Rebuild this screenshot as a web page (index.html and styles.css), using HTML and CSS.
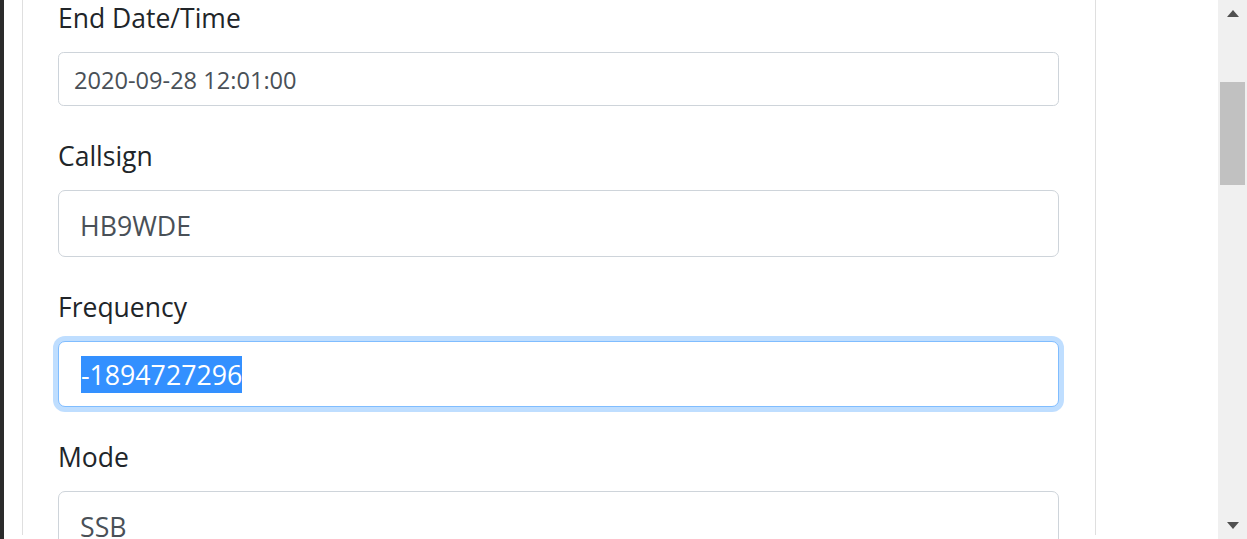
FILE: index.html
```html
<!DOCTYPE html>
<html lang="en">
<head>
<meta charset="utf-8">
<title>Edit QSO</title>
<link rel="stylesheet" href="styles.css">
</head>
<body>
<div class="edge"></div>
<main class="main">
  <div class="card">
    <div class="card-body">
      <div class="form-group">
        <label class="label">End Date/Time</label>
        <input class="form-control form-control-sm" type="text" value="2020-09-28 12:01:00">
      </div>
      <div class="form-group">
        <label class="label">Callsign</label>
        <input class="form-control" type="text" value="HB9WDE">
      </div>
      <div class="form-group">
        <label class="label">Frequency</label>
        <div class="form-control is-focused"><span class="selected">-1894727296</span></div>
      </div>
      <div class="form-group">
        <label class="label">Mode</label>
        <input class="form-control" type="text" value="SSB">
      </div>
    </div>
  </div>
</main>
<div class="scrollbar">
  <div class="sb-btn"><span class="arrow-up"></span></div>
  <div class="sb-track"><div class="sb-thumb"></div></div>
  <div class="sb-btn"><span class="arrow-down"></span></div>
</div>
</body>
</html>
```
FILE: styles.css
```css
html, body {
  margin: 0;
  padding: 0;
  height: 539px;
  overflow: hidden;
}
body {
  display: flex;
  font-family: "Open Sans", "Noto Sans", sans-serif;
  background: #ffffff;
}
.edge {
  width: 4px;
  flex: 0 0 4px;
  background: #2b2b2b;
}
.main {
  flex: 1 1 auto;
  background: #ffffff;
  padding-left: 18px;
  overflow: hidden;
}
.card {
  width: 1074px;
  box-sizing: border-box;
  border-left: 1px solid #dfdfdf;
  border-right: 1px solid #dfdfdf;
  height: 100%;
}
.card-body {
  padding: 0 36px 0 35px;
  margin-top: -4px;
}
.form-group {
  margin-bottom: 28px;
  display: flex;
  flex-direction: column;
}
.label {
  display: block;
  font-size: 26.5px;
  line-height: 45px;
  margin-bottom: 11px;
  color: #212529;
}
.form-control {
  display: block;
  width: 100%;
  box-sizing: border-box;
  height: 66.5px;
  padding: 12px 21px 8px;
  font-family: "Open Sans", "Noto Sans", sans-serif;
  font-size: 26.7px;
  line-height: 37px;
  color: #495057;
  background: #ffffff;
  border: 1px solid #ced4da;
  border-radius: 7px;
  outline: none;
  margin: 0;
}
.form-control-sm {
  height: 54px;
  padding: 9px 14px 7px 15px;
  font-size: 23.6px;
  line-height: 32px;
  border-radius: 5.6px;
}
.is-focused {
  border-color: #80bdff;
  box-shadow: 0 0 0 5px rgba(0, 123, 255, 0.25);
  padding: 10.5px 21px 10.5px 22px;
  display: flex;
  align-items: center;
}
.selected {
  background: #3390ff;
  color: #ffffff;
  line-height: 37px;
  height: 37px;
  display: inline-block;
  margin-top: 2px;
}
.scrollbar {
  width: 29px;
  flex: 0 0 29px;
  background: #f0f0f0;
  display: flex;
  flex-direction: column;
}
.sb-btn {
  height: 27px;
  flex: 0 0 27px;
  display: flex;
  align-items: center;
  justify-content: center;
}
.arrow-up {
  width: 0;
  height: 0;
  border-left: 6.5px solid transparent;
  border-right: 6.5px solid transparent;
  border-bottom: 7px solid #505050;
}
.arrow-down {
  width: 0;
  height: 0;
  border-left: 6.5px solid transparent;
  border-right: 6.5px solid transparent;
  border-top: 7px solid #505050;
}
.sb-track {
  flex: 1 1 auto;
  padding-top: 55px;
}
.sb-thumb {
  height: 103px;
  margin: 0 2px;
  background: #c1c1c1;
}
```
